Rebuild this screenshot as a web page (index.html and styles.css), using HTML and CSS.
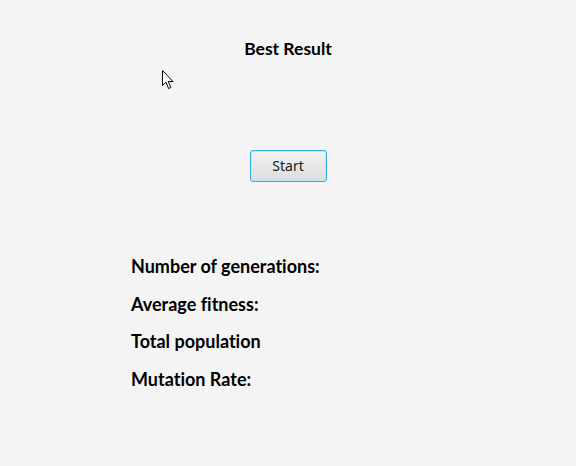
FILE: index.html
```html
<!DOCTYPE html>
<html>
<head>
<meta charset="utf-8">
<link rel="stylesheet" href="styles.css">
</head>
<body>
<div class="app">
  <h1 class="title">Best Result</h1>
  <div class="actions">
    <button class="btn">Start</button>
  </div>
  <div class="stats">
    <div class="stat">Number of generations:</div>
    <div class="stat">Average fitness:</div>
    <div class="stat">Total population</div>
    <div class="stat">Mutation Rate:</div>
  </div>
  <svg class="cursor" width="13" height="20" viewBox="0 0 13 20">
    <path d="M0.5 0.5 L0.5 15.5 L4 12.2 L6.6 18.5 L8.8 17.6 L6.3 11.5 L11 11.5 Z" fill="#fff" stroke="#000" stroke-width="1" stroke-linejoin="miter"/>
  </svg>
</div>
</body>
</html>
```
FILE: styles.css
```css
html, body {
  margin: 0;
  padding: 0;
  background: #f4f4f4;
}
.app {
  position: relative;
  width: 576px;
  height: 466px;
  font-family: "Lato", "Noto Sans", sans-serif;
  font-variant-ligatures: none;
  color: #000;
}
.title {
  margin: 0;
  padding-top: 37px;
  text-align: center;
  font-size: 17.5px;
  font-weight: 700;
  line-height: 24px;
}
.actions {
  display: flex;
  justify-content: center;
  padding-top: 89px;
}
.btn {
  width: 77px;
  height: 32px;
  border: 1px solid #2fb2de;
  border-radius: 3px;
  box-shadow: inset 0 0 0 1px #bde6f4;
  background: linear-gradient(#f2f2f2, #dddddd);
  font-family: "Noto Sans", sans-serif;
  font-size: 14px;
  color: #1a1a1a;
  padding: 0 0 2px 0;
}
.stats {
  display: flex;
  flex-direction: column;
  gap: 13.5px;
  padding: 72px 0 0 131px;
}
.stat {
  font-size: 18px;
  font-weight: 700;
  line-height: 24px;
}
.cursor {
  position: absolute;
  left: 162px;
  top: 70px;
}
```
